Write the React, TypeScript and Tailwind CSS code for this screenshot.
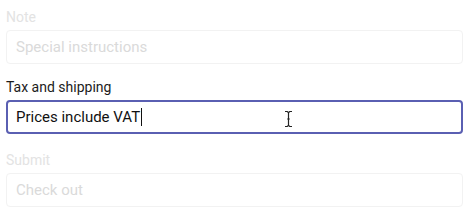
import React from 'react';

// Inactive field, shown faded
function FadedField({ label, placeholder, className = '' }: { label: string; placeholder: string; className?: string }) {
  return (
    <div className={`flex flex-col gap-[3px] ${className}`}>
      <div className="text-[14px] leading-5 text-[#e3e3e3]">{label}</div>
      <div className="h-[34px] rounded-[4px] border border-[#f2f2f2] px-[9px] flex items-center text-[15px] text-[#dadada]">
        {placeholder}
      </div>
    </div>
  );
}

// Mouse I-beam pointer hovering over the field
function TextCursor() {
  return (
    <svg width="9" height="18" viewBox="0 0 9 18" className="absolute left-[276px] top-[8px]">
      <path
        d="M1 1.5h2.3l1.2 1.2 1.2-1.2H8M4.5 2.7v12.6M1 16.5h2.3l1.2-1.2 1.2 1.2H8M3.2 9h2.6"
        fill="none"
        stroke="#222"
        strokeWidth="1.2"
      />
    </svg>
  );
}

export default function App() {
  return (
    <div className="w-[474px] h-[220px] bg-white pl-[6px] pr-[11px] pt-[7px] overflow-hidden font-['Roboto',sans-serif]">
      <FadedField label="Note" placeholder="Special instructions" />

      <div className="flex flex-col gap-[3px] mt-[13px]">
        <div className="text-[14px] leading-5 text-[#1c1c1c]">Tax and shipping</div>
        <div className="relative h-[34px] rounded-[4px] border-2 border-[#5a5fb2] px-[8px] flex items-center text-[15px] text-[#111]">
          <span>Prices include VAT</span>
          <span className="inline-block w-px h-[18px] bg-[#111] ml-px" />
          <TextCursor />
        </div>
      </div>

      <FadedField label="Submit" placeholder="Check out" className="mt-[16px]" />
    </div>
  );
}
